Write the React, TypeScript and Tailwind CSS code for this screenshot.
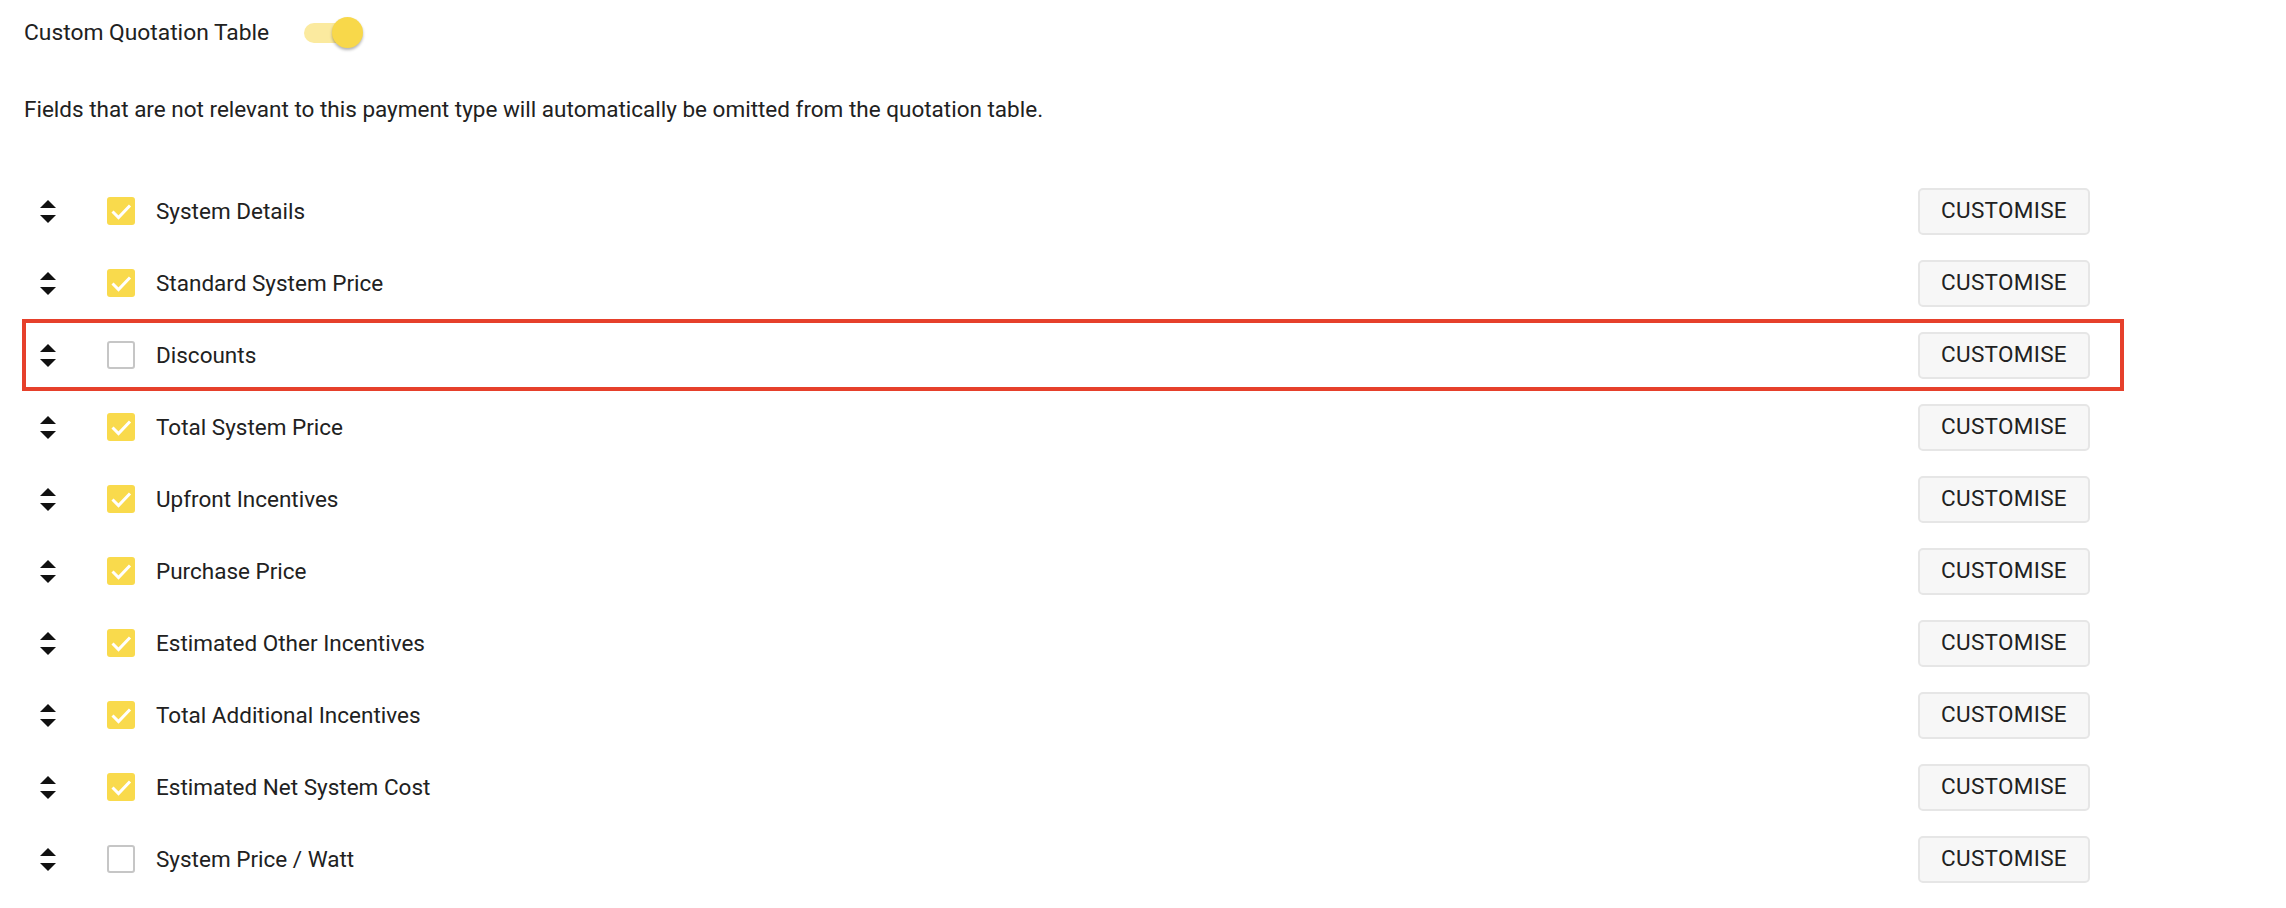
import { useState } from 'react';

type Field = { label: string; checked: boolean; highlight?: boolean };

const initialFields: Field[] = [
  { label: 'System Details', checked: true },
  { label: 'Standard System Price', checked: true },
  { label: 'Discounts', checked: false, highlight: true },
  { label: 'Total System Price', checked: true },
  { label: 'Upfront Incentives', checked: true },
  { label: 'Purchase Price', checked: true },
  { label: 'Estimated Other Incentives', checked: true },
  { label: 'Total Additional Incentives', checked: true },
  { label: 'Estimated Net System Cost', checked: true },
  { label: 'System Price / Watt', checked: false },
];

function SortIcon() {
  return (
    <svg width="16" height="23" viewBox="0 0 16 23" className="shrink-0">
      <path d="M8 0 L16 8 L0 8 Z" fill="#111" />
      <path d="M0 15 L16 15 L8 23 Z" fill="#111" />
    </svg>
  );
}

function Checkbox({ checked, onChange }: { checked: boolean; onChange: () => void }) {
  return (
    <button
      onClick={onChange}
      className={`w-[28px] h-[28px] rounded-[3px] shrink-0 flex items-center justify-center ${
        checked ? 'bg-[#f9da4c]' : 'bg-white border-[2.5px] border-[#c6c6c6]'
      }`}
    >
      {checked && (
        <svg width="28" height="28" viewBox="0 0 28 28">
          <path d="M5.5 14.5 L11.5 20.5 L23 8.5" fill="none" stroke="#fff" strokeWidth="3" />
        </svg>
      )}
    </button>
  );
}

export default function App() {
  const [enabled, setEnabled] = useState(true);
  const [fields, setFields] = useState(initialFields);

  const toggle = (i: number) =>
    setFields(fields.map((f, idx) => (idx === i ? { ...f, checked: !f.checked } : f)));

  return (
    <div className="min-h-screen bg-white text-[#212121] font-['Roboto','Liberation_Sans',sans-serif] text-[22.5px]">
      <div className="pt-[17px] pl-[24px] flex items-center h-[49px]">
        <span className="leading-[32px] text-[22.8px]">Custom Quotation Table</span>
        <button
          onClick={() => setEnabled(!enabled)}
          className="relative ml-[35px] w-[60px] h-[32px] shrink-0"
        >
          <div
            className={`absolute left-0 top-[6px] w-[54px] h-[20px] rounded-full ${
              enabled ? 'bg-[#fbea9f]' : 'bg-[#bdbdbd]'
            }`}
          />
          <div
            className={`absolute top-[0px] w-[31px] h-[31px] rounded-full shadow-[0_2px_3px_rgba(0,0,0,0.3)] ${
              enabled ? 'left-[28px] bg-[#f8d84a]' : 'left-0 bg-[#fafafa]'
            }`}
          />
        </button>
      </div>

      <p className="pl-[24px] mt-[44px] leading-[32px]">
        Fields that are not relevant to this payment type will automatically be omitted from the quotation table.
      </p>

      <div className="mt-[50px] ml-[22px] w-[2102px]">
        {fields.map((f, i) => (
          <div
            key={f.label}
            className={`h-[72px] flex items-center border-[4px] pl-[14px] pr-[30px] ${
              f.highlight ? 'border-[#e6402b]' : 'border-transparent'
            }`}
          >
            <SortIcon />
            <div className="ml-[51px]">
              <Checkbox checked={f.checked} onChange={() => toggle(i)} />
            </div>
            <span className="ml-[21px] leading-[32px]">{f.label}</span>
            <button className="ml-auto w-[172px] h-[47px] rounded-[5px] border-2 border-[#e6e6e6] bg-[#f7f7f7] text-[22.5px] tracking-[0.3px] text-[#212121]">
              CUSTOMISE
            </button>
          </div>
        ))}
      </div>
    </div>
  );
}
